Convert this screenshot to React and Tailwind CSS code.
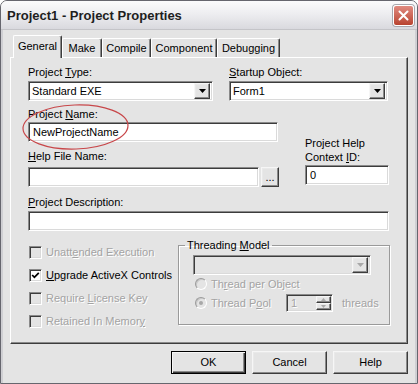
const sunken =
  'border border-t-[#8a8a8a] border-l-[#8a8a8a] border-b-white border-r-white shadow-[inset_1px_1px_0_#3c3c3c,inset_-1px_-1px_0_#dadada]';
const raised =
  'border border-t-[#f6f6f6] border-l-[#f6f6f6] border-b-[#3c3c3c] border-r-[#3c3c3c] shadow-[inset_-1px_-1px_0_#8a8a8a,inset_1px_1px_0_#e9e9e9] bg-[#e4e4e4]';
const dim = 'text-[#a3a3a3] [text-shadow:1px_1px_0_#ffffff]';

function U({ children }) {
  return <span className="underline underline-offset-[1px]">{children}</span>;
}

function Arrow({ disabled }) {
  return (
    <svg width="7" height="4" viewBox="0 0 7 4">
      <path d="M0 0h7L3.5 4z" fill={disabled ? '#a8a8a8' : '#000'} />
    </svg>
  );
}

function Combo({ value, className = '', disabled }) {
  return (
    <div className={`${sunken} ${disabled ? 'bg-[#e4e4e4]' : 'bg-white'} h-[20px] flex items-center pl-[3px] pr-[2px] ${className}`}>
      <span className="flex-1 truncate">{value}</span>
      <div className={`${raised} w-[16px] h-[16px] flex items-center justify-center`}>
        <Arrow disabled={disabled} />
      </div>
    </div>
  );
}

function Field({ value = '', className = '' }) {
  return (
    <div className={`${sunken} bg-white h-[20px] flex items-center pl-[4px] ${className}`}>{value}</div>
  );
}

function Check({ checked, disabled, children }) {
  return (
    <div className="h-[23px] flex items-center">
      <div className={`${sunken} w-[13px] h-[13px] ml-[1px] ${disabled ? 'bg-[#e4e4e4]' : 'bg-white'} flex items-center justify-center`}>
        {checked && (
          <svg width="9" height="9" viewBox="0 0 9 9">
            <polyline points="1.2,4 3.4,6.3 7.8,1.8" fill="none" stroke="#000" strokeWidth="1.8" />
          </svg>
        )}
      </div>
      <span className={`ml-[4px] ${disabled ? dim : ''}`}>{children}</span>
    </div>
  );
}

function Radio({ selected }) {
  return (
    <div className="w-[12px] h-[12px] rounded-full border border-t-[#9a9a9a] border-l-[#9a9a9a] border-b-white border-r-white bg-[#e4e4e4] shadow-[inset_1px_1px_0_#c8c8c8] flex items-center justify-center">
      {selected && <div className="w-[4px] h-[4px] rounded-full bg-[#a8a8a8]" />}
    </div>
  );
}

function Button({ children, def }) {
  return (
    <div
      className={`w-[75px] h-[23px] flex items-center justify-center ${
        def
          ? 'border border-black bg-[#e4e4e4] shadow-[inset_1px_1px_0_#f6f6f6,inset_-1px_-1px_0_#3c3c3c,inset_-2px_-2px_0_#8a8a8a]'
          : raised
      }`}
    >
      {children}
    </div>
  );
}

const tabs = [
  ['General', 49],
  ['Make', 40],
  ['Compile', 49],
  ['Component', 66],
  ['Debugging', 63],
];

export default function App() {
  return (
    <div className="w-[418px] h-[384px] bg-white font-['Liberation_Sans',Arial,sans-serif] text-[11px] leading-[13px] text-black">
      <div className="h-full flex flex-col rounded-t-[7px] border border-[#66666e] bg-[#e4e4e4] overflow-hidden">
        <div className="h-[29px] shrink-0 flex items-center pl-[6px] pr-[3px] bg-gradient-to-b from-[#fbfbfc] via-[#ececef] to-[#d9d9de] border-b border-[#c4c4c8]">
          <span className="flex-1 font-bold text-[13px] text-[#1e1e1e]">Project1 - Project Properties</span>
          <div className="w-[21px] h-[21px] rounded-[3px] border border-white bg-gradient-to-b from-[#e08a80] to-[#b8432f] shadow-[0_0_0_1px_#a8a8ae] flex items-center justify-center">
            <svg width="11" height="11" viewBox="0 0 11 11">
              <path d="M1.5 1.5l8 8M9.5 1.5l-8 8" stroke="#fff" strokeWidth="2" strokeLinecap="round" />
            </svg>
          </div>
        </div>

        <div className="flex-1 flex flex-col px-[9px] pt-[5px] shadow-[inset_2px_0_0_#cfcfd3,inset_-2px_0_0_#cfcfd3]">
          <div className="flex items-end h-[22px] pl-[3px]">
            {tabs.map(([t, w], i) =>
              i === 0 ? (
                <div
                  key={t}
                  style={{ width: w }}
                  className="relative z-10 -mb-px h-[23px] pt-[4px] text-center bg-[#e4e4e4] border-l border-t border-r border-l-white border-t-white border-r-[#3c3c3c] rounded-t-[2px] shadow-[inset_-1px_0_0_#8a8a8a]"
                >
                  {t}
                </div>
              ) : (
                <div
                  key={t}
                  style={{ width: w }}
                  className="h-[19px] pt-[3px] text-center bg-[#e4e4e4] border-l border-t border-r border-l-white border-t-white border-r-[#3c3c3c] rounded-t-[2px] shadow-[inset_-1px_0_0_#8a8a8a]"
                >
                  {t}
                </div>
              )
            )}
          </div>

          <div className="relative h-[287px] border border-t-white border-l-white border-b-[#3c3c3c] border-r-[#3c3c3c] shadow-[inset_-1px_-1px_0_#8a8a8a] pl-[17px] pt-[8px]">
            <div className="flex">
              <div className="w-[185px]">
                <div>Project <U>T</U>ype:</div>
                <Combo value="Standard EXE" className="mt-[2px]" />
              </div>
              <div className="w-[159px] ml-[16px]">
                <div><U>S</U>tartup Object:</div>
                <Combo value="Form1" className="mt-[2px]" />
              </div>
            </div>

            <div className="flex mt-[7px]">
              <div className="w-[251px]">
                <div>Project <U>N</U>ame:</div>
                <Field value="NewProjectName" className="mt-[1px] w-[250px]" />
                <div className="mt-[8px]"><U>H</U>elp File Name:</div>
                <div className="flex mt-[4px]">
                  <Field className="w-[231px]" />
                  <div className={`${raised} ml-[2px] w-[18px] h-[20px] flex items-end justify-center pb-[3px] leading-none`}>...</div>
                </div>
              </div>
              <div className="w-[84px] ml-[26px] pt-[28px]">
                <div className="leading-[14px]">
                  Project Help
                  <br />
                  Context <U>I</U>D:
                </div>
                <Field value="0" className="mt-[1px]" />
              </div>
            </div>

            <div className="mt-[9px]"><U>P</U>roject Description:</div>
            <Field className="mt-[2px] w-[361px]" />

            <div className="flex mt-[8px]">
              <div className="w-[150px] pt-[2px]">
                <Check disabled>Unatt<U>e</U>nded Execution</Check>
                <Check checked><U>U</U>pgrade ActiveX Controls</Check>
                <Check disabled>Require <U>L</U>icense Key</Check>
                <Check disabled>Retained In Memor<U>y</U></Check>
              </div>
              <fieldset className="w-[212px] h-[86px] border border-[#9a9a9a] shadow-[1px_1px_0_#ffffff,inset_1px_1px_0_#ffffff] pl-[14px]">
                <legend className="ml-[-8px] px-[2px]">Threading <U>M</U>odel</legend>
                <Combo disabled className="mt-[3px] w-[178px] h-[19px]" />
                <div className="flex items-center h-[18px] pl-[2px]">
                  <Radio />
                  <span className={`ml-[4px] ${dim}`}>Th<U>r</U>ead per Object</span>
                </div>
                <div className="flex items-center h-[20px] pl-[2px]">
                  <Radio selected />
                  <span className={`ml-[4px] w-[75px] ${dim}`}>Thread P<U>o</U>ol</span>
                  <div className={`${sunken} bg-[#e4e4e4] w-[47px] h-[18px] flex items-center pl-[4px] pr-[1px]`}>
                    <span className={`flex-1 ${dim}`}>1</span>
                    <div className="flex flex-col w-[15px] h-[14px]">
                      <div className={`${raised} flex-1 flex items-center justify-center`}>
                        <svg width="5" height="3" viewBox="0 0 5 3"><path d="M0 3h5L2.5 0z" fill="#a8a8a8" /></svg>
                      </div>
                      <div className={`${raised} flex-1 flex items-center justify-center`}>
                        <svg width="5" height="3" viewBox="0 0 5 3"><path d="M0 0h5L2.5 3z" fill="#a8a8a8" /></svg>
                      </div>
                    </div>
                  </div>
                  <span className={`ml-[9px] ${dim}`}>threads</span>
                </div>
              </fieldset>
            </div>

            <svg className="absolute left-[10px] top-[45px]" width="110" height="50" viewBox="0 0 110 50">
              <ellipse cx="54.5" cy="24" rx="52.5" ry="22" fill="none" stroke="#c8474a" strokeWidth="1.2" transform="rotate(-2 54.5 24)" />
            </svg>
          </div>

          <div className="flex justify-end gap-[6px] mt-[7px]">
            <Button def>OK</Button>
            <Button>Cancel</Button>
            <Button>Help</Button>
          </div>
        </div>
      </div>
    </div>
  );
}
